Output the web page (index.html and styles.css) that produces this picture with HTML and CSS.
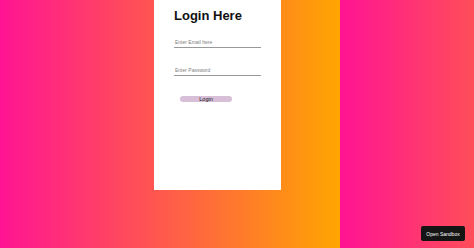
FILE: index.html
```html
<!DOCTYPE html>
<html>
<head>
  <meta charset="utf-8">
  <meta name="viewport" content="width=device-width, initial-scale=1">
  <title>Login</title>
  <link rel="stylesheet" href="styles.css">
</head>
<body>

  <div id="login-container">
    <h1>Login Here</h1>
    <form id="loginForm">
      <input type="email" id="email" placeholder="Enter Email here">
      <input type="password" id="password" placeholder="Enter Password">
      <button type="button" id="loginBtn">Login</button>
    </form>
  </div>

  <a class="open-sandbox" href="#">Open Sandbox</a>

</body>
</html>
```

FILE: styles.css
```css
html, body {
  height: 100%;
}
body {
  background: linear-gradient(to right, deeppink, orange);
  background-size: 340px 100%;
  background-repeat: repeat-x;
  font-family: "Liberation Sans", Arial, sans-serif;
  margin: 0;
  padding: 0;
}
#login-container {
  background: #ffffff;
  width: 127px;
  height: 190px;
  margin-left: 154px;
  padding: 8px 20px 0 20px;
  box-sizing: border-box;
}
h1 {
  font-size: 13px;
  line-height: 16px;
  font-weight: bold;
  color: #111;
  margin: 0 0 13px 0;
}
#loginForm {
  display: flex;
  flex-direction: column;
  align-items: flex-start;
}
input {
  width: 87px;
  height: 11px;
  box-sizing: border-box;
  padding: 0 0 0 1px;
  margin: 0 0 17px 0;
  border: none;
  border-bottom: 1px solid #999;
  font-family: "Liberation Sans", Arial, sans-serif;
  font-size: 5px;
  outline: none;
}
input::placeholder {
  color: #808080;
}
button {
  background-color: #d8bfd8;
  color: #111;
  width: 52px;
  height: 6px;
  margin: 3px 0 0 6px;
  padding: 0;
  border: none;
  border-radius: 3px;
  font-family: "Liberation Sans", Arial, sans-serif;
  font-size: 5.5px;
  line-height: 6px;
  cursor: pointer;
}
.open-sandbox {
  position: fixed;
  right: 9px;
  bottom: 7px;
  width: 44px;
  height: 15px;
  display: flex;
  align-items: center;
  justify-content: center;
  background: #151515;
  color: #fff;
  font-size: 5px;
  text-decoration: none;
  border-radius: 2px;
}
```
